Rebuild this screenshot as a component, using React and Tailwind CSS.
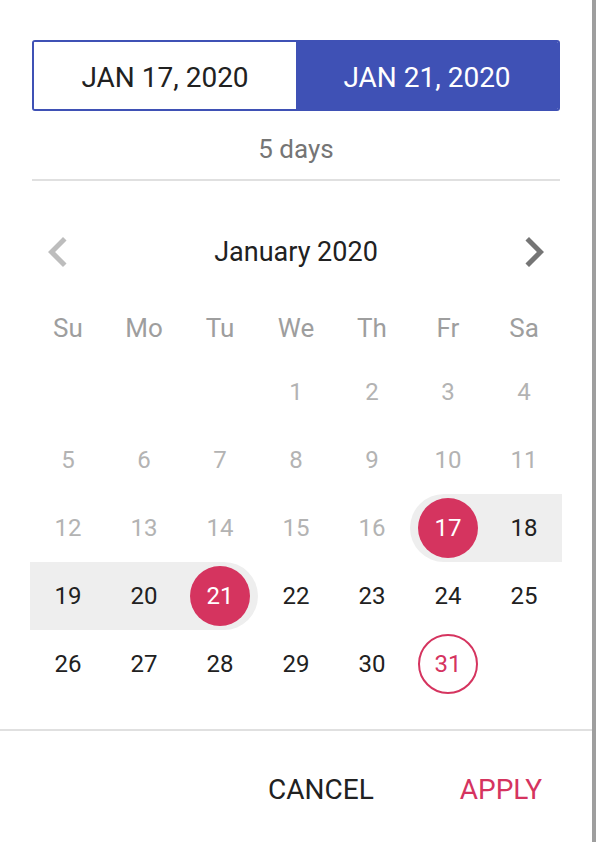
import React from 'react';

const weekdays = ['Su', 'Mo', 'Tu', 'We', 'Th', 'Fr', 'Sa'];

// January 2020 starts on a Wednesday
const weeks = [
  [null, null, null, 1, 2, 3, 4],
  [5, 6, 7, 8, 9, 10, 11],
  [12, 13, 14, 15, 16, 17, 18],
  [19, 20, 21, 22, 23, 24, 25],
  [26, 27, 28, 29, 30, 31, null],
];

const start = 17;
const end = 21;
const today = 31;

const DayCell = ({ day }) => {
  if (!day) return <div className="h-[68px]" />;

  const inRange = day >= start && day <= end;
  const isStart = day === start;
  const isEnd = day === end;
  const past = day < start;

  let band = '';
  if (inRange) band = 'bg-[#eeeeee]';
  if (isStart) band += ' rounded-l-full';
  if (isEnd) band += ' rounded-r-full';

  let circle = 'text-[#212121]';
  if (past) circle = 'text-[#b3b3b3]';
  if (isStart || isEnd) circle = 'bg-[#d5345f] text-white';
  if (day === today) circle = 'border-2 border-[#d5345f] text-[#d5345f]';

  return (
    <div className={`h-[68px] flex items-center justify-center ${band}`}>
      <div className={`w-[60px] h-[60px] rounded-full flex items-center justify-center text-[24px] ${circle}`}>
        {day}
      </div>
    </div>
  );
};

const App = () => {
  return (
    <div className="flex min-h-[842px] bg-white" style={{ fontFamily: 'Roboto, "Noto Sans", sans-serif' }}>
      <div className="w-[592px] flex flex-col">
        <div className="px-8 pt-10">
          <div className="flex h-[71px] rounded-[3px] border-2 border-[#3f51b5] overflow-hidden">
            <button className="flex-1 flex items-center justify-center pt-1 text-[28px] text-[#212121] bg-white">
              JAN 17, 2020
            </button>
            <button className="flex-1 flex items-center justify-center pt-1 text-[28px] text-white bg-[#3f51b5]">
              JAN 21, 2020
            </button>
          </div>
          <div className="h-[70px] pt-2 flex items-center justify-center text-[26px] text-[#757575] border-b-2 border-[#e0e0e0]">
            5 days
          </div>
        </div>

        <div className="px-[28px] mt-[41px] flex items-center justify-between h-[60px]">
          <svg width="60" height="60" viewBox="0 0 24 24" fill="#bdbdbd">
            <path d="M15.41 7.41L14 6l-6 6 6 6 1.41-1.41L10.83 12z" />
          </svg>
          <div className="text-[27px] text-[#212121]">January 2020</div>
          <svg width="60" height="60" viewBox="0 0 24 24" fill="#757575">
            <path d="M10 6L8.59 7.41 13.17 12l-4.58 4.59L10 18l6-6z" />
          </svg>
        </div>

        <div className="px-[30px] mt-[16px]">
          <div className="grid grid-cols-7 h-[60px]">
            {weekdays.map((w) => (
              <div key={w} className="flex items-center justify-center text-[26px] text-[#9e9e9e]">
                {w}
              </div>
            ))}
          </div>
          {weeks.map((week, i) => (
            <div key={i} className="grid grid-cols-7">
              {week.map((d, j) => (
                <DayCell key={j} day={d} />
              ))}
            </div>
          ))}
        </div>

        <div className="mt-[31px] border-t-2 border-[#e0e0e0] h-[120px] flex items-center justify-end pr-[50px] gap-[86px]">
          <button className="text-[28px] text-[#212121]">CANCEL</button>
          <button className="text-[28px] text-[#d5345f]">APPLY</button>
        </div>
      </div>
      <div className="w-[4px] bg-[#9e9e9e]" />
    </div>
  );
};

export default App;
